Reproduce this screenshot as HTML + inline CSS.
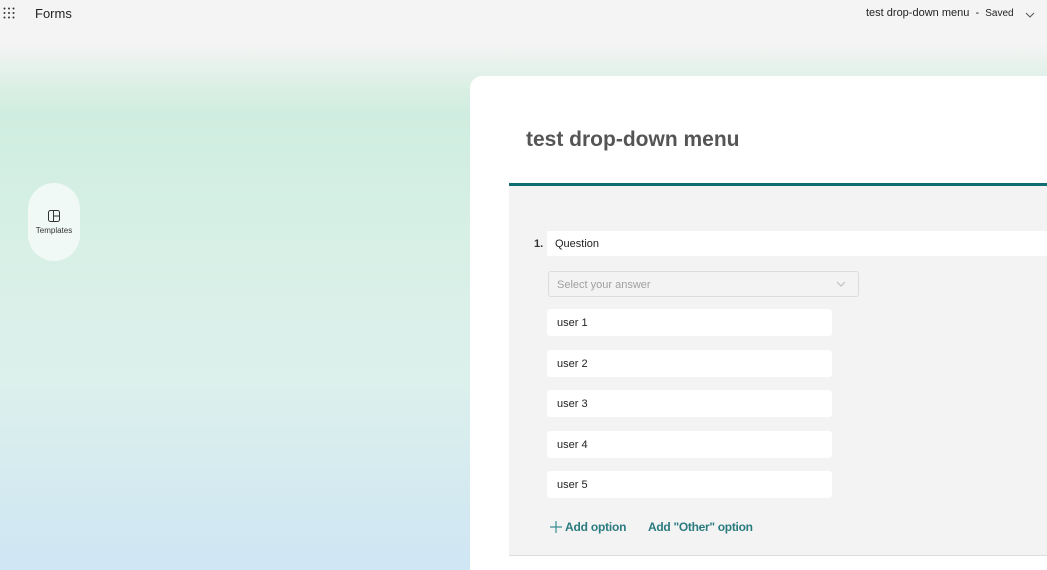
<!DOCTYPE html>
<html style="width:1047px;height:570px;overflow:hidden"><head><meta charset="utf-8"><style>
*{margin:0;padding:0;box-sizing:border-box}
body{width:1047px;height:570px;overflow:hidden;font-family:"Segoe UI","Liberation Sans",sans-serif;position:relative;
background:linear-gradient(180deg,#f4f4f4 0px,#f3f4f3 45px,#d9efe4 90px,#cfede0 115px,#d8f0e6 250px,#dcf0ec 380px,#cfe6f4 570px);}
.abs{position:absolute}
.card{position:absolute;left:470px;top:76px;width:577px;height:494px;background:#fff;border-radius:12px 0 0 0}
.sec{position:absolute;left:509px;top:183px;width:538px;height:372px;background:#f3f3f3;border-top:3px solid #0f6d73}
.opt{position:absolute;left:547px;width:285px;height:27px;background:#fff;border-radius:3px;font-size:11px;color:#222;padding:8px 10px 0}
</style></head><body>
<svg class="abs" style="left:3px;top:7px" width="13" height="13"><g fill="#333"><circle cx="1.5" cy="1.5" r="1"/><circle cx="6" cy="1.5" r="1"/><circle cx="10.5" cy="1.5" r="1"/><circle cx="1.5" cy="6" r="1"/><circle cx="6" cy="6" r="1"/><circle cx="10.5" cy="6" r="1"/><circle cx="1.5" cy="10.5" r="1"/><circle cx="6" cy="10.5" r="1"/><circle cx="10.5" cy="10.5" r="1"/></g></svg>
<div class="abs" style="left:35px;top:6px;font-size:13px;color:#222">Forms</div>
<div class="abs" style="left:866px;top:7px;font-size:11px;color:#222">test drop-down menu &nbsp;- &nbsp;<span style="font-size:10px">Saved</span></div>
<svg class="abs" style="left:1025px;top:12px" width="10" height="6"><path d="M1 1l4 4 4-4" stroke="#555" fill="none"/></svg>
<div class="abs" style="left:28px;top:183px;width:52px;height:78px;border-radius:26px;background:#f1f9f6"></div>
<svg class="abs" style="left:48px;top:210px" width="12" height="12"><rect x="0.5" y="0.5" width="11" height="11" rx="2" fill="none" stroke="#333"/><path d="M5.5 1v10M5.5 6h5.5" stroke="#333"/></svg>
<div class="abs" style="left:28px;top:226px;width:52px;text-align:center;font-size:8px;color:#333">Templates</div>
<div class="card"></div>
<div class="abs" style="left:526px;top:128px;font-size:21px;font-weight:600;color:#555">test drop-down menu</div>
<div class="sec"></div>
<div class="abs" style="left:509px;top:555px;width:538px;height:1px;background:#ddd"></div>
<div class="abs" style="left:534px;top:238px;font-size:11px;font-weight:600;color:#333">1.</div>
<div class="abs" style="left:547px;top:231px;width:500px;height:25px;background:#fff;font-size:11px;color:#222;padding:7px 8px 0">Question</div>
<div class="abs" style="left:548px;top:271px;width:311px;height:26px;border:1px solid #dcdcdc;border-radius:3px;background:#f3f3f3;font-size:11px;color:#a0a0a0;padding:7px 8px 0">Select your answer</div>
<svg class="abs" style="left:836px;top:281px" width="10" height="6"><path d="M1 1l4 4 4-4" stroke="#bbb" fill="none"/></svg>
<div class="opt" style="top:309px">user 1</div>
<div class="opt" style="top:350px">user 2</div>
<div class="opt" style="top:390px">user 3</div>
<div class="opt" style="top:431px">user 4</div>
<div class="opt" style="top:471px">user 5</div>
<svg class="abs" style="left:549px;top:520px" width="14" height="14"><path d="M7 1v12M1 7h12" stroke="#3a8f91" stroke-width="1.2"/></svg>
<div class="abs" style="left:565px;top:520px;font-size:12px;font-weight:600;color:#2b7b80;letter-spacing:-0.2px">Add option</div>
<div class="abs" style="left:648px;top:520px;font-size:12px;font-weight:600;color:#2b7b80;letter-spacing:-0.3px">Add "Other" option</div>
</body></html>
